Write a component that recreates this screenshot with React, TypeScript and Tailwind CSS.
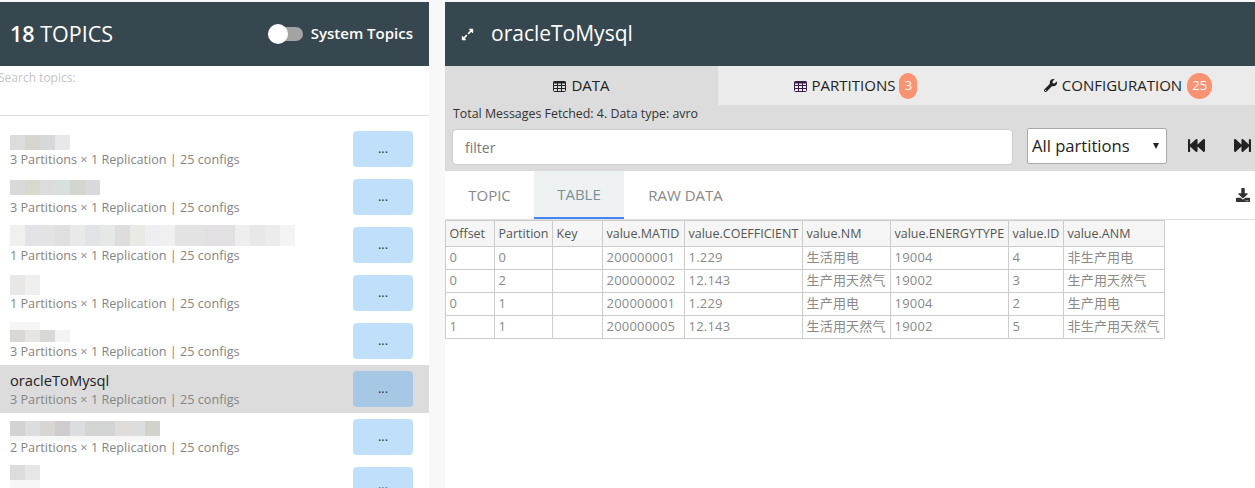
import { FaWrench, FaExpandAlt, FaFastBackward, FaFastForward, FaDownload } from 'react-icons/fa';

const FONT = '"Open Sans", "Noto Sans CJK SC", sans-serif';

interface Blur {
  top: number;
  height: number;
  cells: string[];
  // faint strip above or below the solid cells
  above?: number;
  below?: number;
}

interface Topic {
  partitions: number;
  name?: string;
  selected?: boolean;
  blur?: Blur;
}

const TOPICS: Topic[] = [
  { partitions: 3, blur: { top: 7, height: 15, cells: ['#dcdcdc', '#d6d6ce', '#d6d8dc', '#e8e8e8'] } },
  { partitions: 3, blur: { top: 4, height: 15, cells: ['#d9d9d9', '#d8d8cf', '#dcdcdc', '#d8dfdf', '#d3d5cf', '#d8d8dd'] } },
  {
    partitions: 1,
    blur: {
      top: 1,
      height: 21,
      cells: ['#f0f0ee', '#e2e3e6', '#e3e3e3', '#e0e0e0', '#e8e9e9', '#e2e3e6', '#e6e8e6', '#dfdcde', '#e9e9e5', '#eeeef2', '#f0f0f0', '#e3e3e3', '#e3e3e3', '#e2e0e2', '#e2e0e2', '#eeeeee', '#e8e8e8', '#ececec', '#f4f4f4'],
    },
  },
  { partitions: 1, blur: { top: 3, height: 20, cells: ['#e8e7e6', '#eeeff0'] } },
  { partitions: 3, blur: { top: 2, above: 8, height: 12, cells: ['#d9d8d5', '#e6e5e3', '#d8d8d6', '#f3f3f3'] } },
  { partitions: 3, name: 'oracleToMysql', selected: true },
  {
    partitions: 2,
    blur: { top: 5, height: 15, below: 5, cells: ['#d3d3d3', '#dcdde0', '#d9d5d1', '#cfccd0', '#dcdde0', '#d3d5d5', '#d2d5d4', '#e0dcda', '#dcdedd', '#d2d2cd'] },
  },
  { partitions: 1, blur: { top: 1, height: 15, below: 8, cells: ['#dcdcdc', '#e6e6e8'] } },
];

const COLUMNS = [
  { name: 'Offset', width: 49 },
  { name: 'Partition', width: 58 },
  { name: 'Key', width: 50 },
  { name: 'value.MATID', width: 82 },
  { name: 'value.COEFFICIENT', width: 118 },
  { name: 'value.NM', width: 88 },
  { name: 'value.ENERGYTYPE', width: 118 },
  { name: 'value.ID', width: 55 },
  { name: 'value.ANM', width: 101 },
];

const RECORDS = [
  ['0', '0', '', '200000001', '1.229', '生活用电', '19004', '4', '非生产用电'],
  ['0', '2', '', '200000002', '12.143', '生产用天然气', '19002', '3', '生产用天然气'],
  ['0', '1', '', '200000001', '1.229', '生产用电', '19004', '2', '生产用电'],
  ['1', '1', '', '200000005', '12.143', '生活用天然气', '19002', '5', '非生产用天然气'],
];

function GridIcon({ color }: { color: string }) {
  return (
    <svg width="13" height="11" viewBox="0 0 13 11" fill="none" stroke={color} strokeWidth="1" className="mt-[1px] shrink-0">
      <rect x="0.5" y="0.5" width="12" height="10" rx="1" strokeWidth="1" />
      <path d="M0.5 1.5H12.5" strokeWidth="2" />
      <path d="M0.5 4.5H12.5M0.5 7.5H12.5M4.5 1V10.5M8.5 1V10.5" />
    </svg>
  );
}

function BlurBlock({ blur }: { blur: Blur }) {
  const width = blur.cells.length * 15;
  return (
    <div style={{ paddingTop: blur.top }}>
      {blur.above && <div className="bg-[#f6f6f6]" style={{ height: blur.above, width: 30 }} />}
      <div className="flex">
        {blur.cells.map((color, i) => (
          <div key={i} className="w-[15px] shrink-0" style={{ backgroundColor: color, height: blur.height }} />
        ))}
      </div>
      {blur.below && <div className="bg-[#f7f7f7]" style={{ height: blur.below, width }} />}
    </div>
  );
}

function TopicRow({ topic }: { topic: Topic }) {
  return (
    <div className={`flex h-12 shrink-0 items-center justify-between pl-[10px] pr-4 ${topic.selected ? 'bg-[#dcdcdc]' : ''}`}>
      <div className="min-w-0 pb-[2px]">
        <div className="h-[22px] text-[14.7px] leading-[24px] text-[#222]">
          {topic.name}
          {topic.blur && <BlurBlock blur={topic.blur} />}
        </div>
        <div className="h-[18px] whitespace-nowrap text-[12.65px] leading-[18px] text-[#858585]">
          {topic.partitions} Partitions × 1 Replication | 25 configs
        </div>
      </div>
      <button
        type="button"
        className={`h-9 w-[60px] rounded-[4px] text-[13px] text-[#333] ${topic.selected ? 'bg-[#a6c8e4]' : 'bg-[#bfdffa]'}`}
      >
        ...
      </button>
    </div>
  );
}

export default function App() {
  return (
    <div className="flex h-[488px] w-[1255px] overflow-hidden bg-[#f8f8f8] pt-[2px]" style={{ fontFamily: FONT }}>
      <aside className="flex w-[429px] shrink-0 flex-col bg-white">
        <header className="flex h-16 shrink-0 items-center justify-between bg-[#37474f] pl-[10px] pr-4 text-white">
          <div className="text-[21.5px]">
            <span className="font-semibold">18</span> TOPICS
          </div>
          <div className="flex items-center gap-2 text-[15px] font-semibold">
            <div className="relative -ml-[1px] h-[14px] w-[35px] rounded-full bg-[#a3a3a3]">
              <div className="absolute left-0 -top-[3px] h-5 w-5 rounded-full bg-white" />
            </div>
            <span className="pb-[2px]">System Topics</span>
          </div>
        </header>
        <div className="h-[50px] shrink-0 overflow-hidden border-b border-[#e0e0e0]">
          <div className="-ml-[2px] mt-[3px] text-[12px] text-[#c4c4c4]">Search topics:</div>
        </div>
        <div className="flex-1 overflow-hidden pt-[9px]">
          {TOPICS.map((topic, i) => (
            <TopicRow key={i} topic={topic} />
          ))}
        </div>
      </aside>

      <main className="ml-4 flex w-[810px] shrink-0 flex-col bg-white">
        <header className="flex h-16 shrink-0 items-center gap-[17px] bg-[#37474f] pl-[16px] text-[21px] text-white">
          <FaExpandAlt className="text-[13px]" />
          oracleToMysql
        </header>

        <nav className="flex h-[39px] shrink-0 text-[15px] text-[#222]">
          <div className="flex w-[273px] items-center justify-center gap-[5px] bg-[#dcdcdc]">
            <GridIcon color="#222" /> DATA
          </div>
          <div className="flex w-[273px] items-center justify-center gap-[5px] bg-[#ebebeb] pl-[2px]">
            <GridIcon color="#3a1a4a" /> PARTITIONS
            <span className="-ml-[1px] flex h-[26px] w-[18px] items-center justify-center rounded-full bg-[#fb9272] text-[13px] text-white">3</span>
          </div>
          <div className="flex flex-1 items-center justify-center gap-[5px] bg-[#ebebeb] pl-[10px]">
            <FaWrench className="text-[13px]" /> CONFIGURATION
            <span className="flex h-[26px] w-[25px] items-center justify-center rounded-full bg-[#fb9272] text-[13px] text-white">25</span>
          </div>
        </nav>

        <section className="h-[66px] shrink-0 bg-[#dcdcdc] pl-[7px]">
          <div className="h-6 pl-[1px] pt-[1px] text-[12.4px] leading-[16px] text-[#333]">Total Messages Fetched: 4. Data type: avro</div>
          <div className="flex items-start">
            <input
              readOnly
              placeholder="filter"
              className="h-[36px] w-[561px] rounded-[4px] border border-[#ccc] bg-white px-3 text-[14px] placeholder:text-[#777]"
            />
            <div className="relative ml-[14px] -mt-[1px] h-[36px] w-[140px]">
              <select
                className="h-full w-full appearance-none rounded-[2px] border border-[#a9a9a9] bg-white pl-[4px] text-[16.6px] text-[#222]"
                defaultValue="all"
              >
                <option value="all">All partitions</option>
              </select>
              <span className="absolute right-[8px] top-[15px] h-0 w-0 border-x-[3px] border-t-[6px] border-x-transparent border-t-[#222]" />
            </div>
            <FaFastBackward className="ml-[21px] mt-[8px] text-[17px] text-[#222]" />
            <FaFastForward className="ml-[29px] mt-[8px] text-[17px] text-[#222]" />
          </div>
        </section>

        <div className="flex h-[49px] shrink-0 items-stretch justify-between border-b border-[#e0e0e0] text-[15px] text-[#888]">
          <div className="flex">
            <div className="flex w-[89px] items-center justify-center">TOPIC</div>
            <div className="flex w-[90px] items-center justify-center border-b-2 border-[#4285f4] bg-[#edf1f2] text-[#78909c]">TABLE</div>
            <div className="flex w-[123px] items-center justify-center">RAW DATA</div>
          </div>
          <div className="flex items-center pr-[5px]">
            <FaDownload className="text-[14px] text-[#333]" />
          </div>
        </div>

        <table className="table-fixed border-collapse text-[12.5px] leading-[16px]" style={{ width: 719 }}>
          <colgroup>
            {COLUMNS.map((col) => (
              <col key={col.name} style={{ width: col.width }} />
            ))}
          </colgroup>
          <thead>
            <tr className="h-[26px] bg-[#f5f5f5] text-[#555]">
              {COLUMNS.map((col) => (
                <th key={col.name} className="whitespace-nowrap border border-[#ccc] px-[3.5px] text-left font-normal">
                  {col.name}
                </th>
              ))}
            </tr>
          </thead>
          <tbody>
            {RECORDS.map((record, i) => (
              <tr key={i} className="h-[23px] text-[13px] tracking-[0.2px] text-[#8a8a8a]">
                {record.map((value, j) => (
                  <td key={j} className="whitespace-nowrap border border-[#ccc] px-[3.5px] pb-[2px]">
                    {value}
                  </td>
                ))}
              </tr>
            ))}
          </tbody>
        </table>
      </main>
    </div>
  );
}
